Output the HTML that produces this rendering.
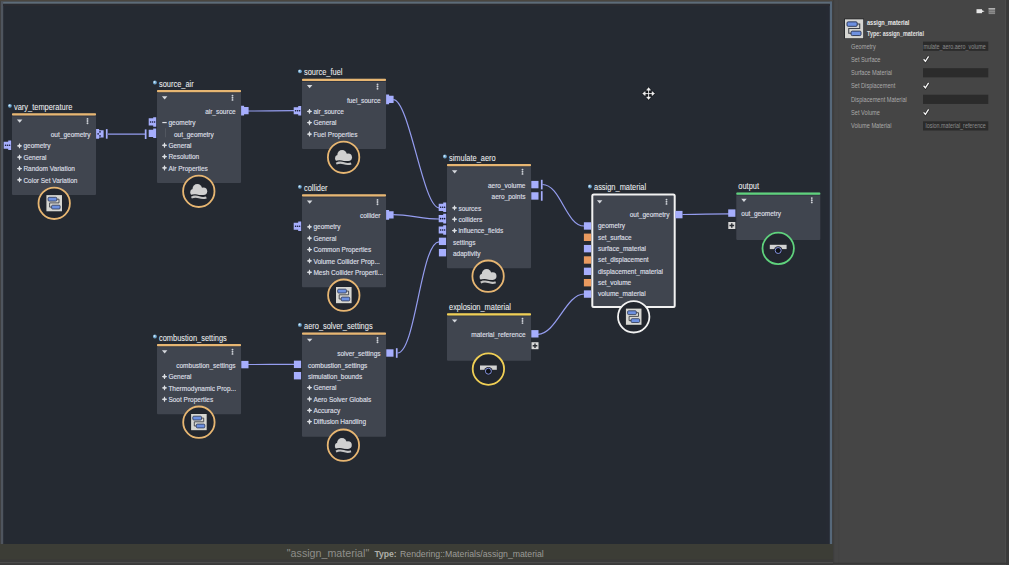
<!DOCTYPE html>
<html><head><meta charset="utf-8"><style>
html,body{margin:0;padding:0;width:1009px;height:565px;overflow:hidden;background:#454545;font-family:"Liberation Sans", sans-serif;}
</style></head><body>
<svg width="1009" height="565" viewBox="0 0 1009 565" style="position:absolute;left:0;top:0" font-family='"Liberation Sans", sans-serif'>
<rect x="0" y="0" width="1009" height="565" fill="#454545"/>
<rect x="0" y="0" width="833" height="565" fill="#3b3b3b"/>
<rect x="3" y="4" width="827" height="540" fill="#252a32"/>
<rect x="0" y="0" width="833" height="1.5" fill="#4a4640"/>
<rect x="1" y="1.6" width="831" height="2" fill="#5d6c7a"/>
<rect x="0.8" y="1.6" width="2.4" height="542.4" fill="#4f555e"/>
<rect x="825.5" y="4" width="4.3" height="540" fill="#262a33"/>
<rect x="829.8" y="1.6" width="2.3" height="542.4" fill="#56687a"/>
<rect x="3" y="4" width="827" height="2" fill="#2a2b31"/>
<rect x="0" y="544" width="833" height="15.7" fill="#3c3d36"/>
<rect x="0" y="559.7" width="833" height="5.3" fill="#3a3a3a"/>
<rect x="0" y="562.1" width="833" height="1.0" fill="#4e4e4e"/>
<text transform="translate(286.80,556.80) scale(1.0,1)" font-size="10.7" fill="#8e8e8a" font-weight="normal">"assign_material"</text>
<text transform="translate(374.40,556.80) scale(1.05,1)" font-size="8.2" fill="#afafaa" font-weight="bold">Type:</text>
<text transform="translate(400.00,557.00) scale(0.98,1)" font-size="8.9" fill="#9b9b97" font-weight="normal">Rendering::Materials/assign_material</text>
<rect x="833" y="0" width="176" height="565" fill="#454545"/>
<rect x="833" y="0" width="1.2" height="565" fill="#3e3e3e"/>
<rect x="838.5" y="0" width="0.8" height="565" fill="#424242"/>
<rect x="1005" y="0" width="1.2" height="565" fill="#4b4b4b"/>
<rect x="833" y="562.7" width="176" height="1.6" fill="#383838"/>
<rect x="833" y="564.3" width="176" height="0.7" fill="#424242"/>
<rect x="1006.2" y="0" width="2.8" height="565" fill="#393939"/>
<rect x="976.5" y="9.2" width="5.5" height="4" fill="#e6e6e6"/>
<path d="M982,10.2 L984.6,11.2 L982,12.3Z" fill="#e6e6e6"/>
<rect x="988.6" y="8" width="6.5" height="6.1" fill="#8a8a8a"/>
<rect x="988.6" y="8" width="6.5" height="1.2" fill="#b0b0b0"/>
<rect x="988.6" y="10.40" width="6.5" height="0.6" fill="#6a6a6a"/>
<rect x="988.6" y="12.30" width="6.5" height="0.6" fill="#6a6a6a"/>
<rect x="844.2" y="18.5" width="19.8" height="19.8" fill="#2c2c2c"/>
<g transform="translate(845.00,19.30) scale(1.17)">
<rect x="-0.3" y="-0.3" width="16.2" height="16.8" fill="#1c1f25"/>
<rect x="0" y="0" width="15.6" height="16.2" fill="#d6d6d2"/>
<path d="M10.2,4.1 H12.6 V7.8 H3.2 V12 H5.2" stroke="#3c4048" stroke-width="0.9" fill="none"/>
<rect x="1.7" y="2.2" width="8.7" height="3.8" rx="1" fill="#6d90e0" stroke="#2b3550" stroke-width="0.8"/>
<rect x="5.2" y="10.1" width="8.5" height="3.8" rx="1" fill="#6d90e0" stroke="#2b3550" stroke-width="0.8"/>
</g>
<text transform="translate(867.00,25.20) scale(0.78,1)" font-size="7.2" fill="#e8e8e8" font-weight="bold">assign_material</text>
<text transform="translate(867.00,36.20) scale(0.76,1)" font-size="7.2" fill="#e0e0e0" font-weight="bold">Type: assign_material</text>
<text transform="translate(851.00,48.50) scale(0.82,1)" font-size="6.9" fill="#aaaaaa" font-weight="normal">Geometry</text>
<rect x="923" y="41.60" width="65.3" height="9.2" fill="#2b2b2b"/>
<svg x="923" y="41.60" width="65.3" height="9.2"><text transform="translate(62.8,6.9) scale(0.78,1)" text-anchor="end" font-size="6.9" fill="#8c8c8c">mulate_aero.aero_volume</text></svg>
<text transform="translate(851.00,61.78) scale(0.82,1)" font-size="6.9" fill="#aaaaaa" font-weight="normal">Set Surface</text>
<path d="M923.6,59.28 L925.4,61.28 L928.6,56.28" stroke="#1e1e1e" stroke-width="2.6" fill="none"/>
<path d="M923.6,59.28 L925.4,61.28 L928.6,56.28" stroke="#f4f4f4" stroke-width="1.4" fill="none"/>
<text transform="translate(851.00,75.06) scale(0.82,1)" font-size="6.9" fill="#aaaaaa" font-weight="normal">Surface Material</text>
<rect x="923" y="68.16" width="65.3" height="9.2" fill="#2b2b2b"/>
<text transform="translate(851.00,88.34) scale(0.82,1)" font-size="6.9" fill="#aaaaaa" font-weight="normal">Set Displacement</text>
<path d="M923.6,85.84 L925.4,87.84 L928.6,82.84" stroke="#1e1e1e" stroke-width="2.6" fill="none"/>
<path d="M923.6,85.84 L925.4,87.84 L928.6,82.84" stroke="#f4f4f4" stroke-width="1.4" fill="none"/>
<text transform="translate(851.00,101.62) scale(0.82,1)" font-size="6.9" fill="#aaaaaa" font-weight="normal">Displacement Material</text>
<rect x="923" y="94.72" width="65.3" height="9.2" fill="#2b2b2b"/>
<text transform="translate(851.00,114.90) scale(0.82,1)" font-size="6.9" fill="#aaaaaa" font-weight="normal">Set Volume</text>
<path d="M923.6,112.40 L925.4,114.40 L928.6,109.40" stroke="#1e1e1e" stroke-width="2.6" fill="none"/>
<path d="M923.6,112.40 L925.4,114.40 L928.6,109.40" stroke="#f4f4f4" stroke-width="1.4" fill="none"/>
<text transform="translate(851.00,128.18) scale(0.82,1)" font-size="6.9" fill="#aaaaaa" font-weight="normal">Volume Material</text>
<rect x="923" y="121.28" width="65.3" height="9.2" fill="#2b2b2b"/>
<svg x="923" y="121.28" width="65.3" height="9.2"><text transform="translate(62.8,6.9) scale(0.78,1)" text-anchor="end" font-size="6.9" fill="#8c8c8c">losion.material_reference</text></svg>
<path d="M108,134.2 C126.5,134.2 126.5,134.2 145,134.2" stroke="#959df0" stroke-width="1.2" fill="none"/>
<rect x="144.8" y="129.4" width="1.7" height="9.6" fill="#a6aefd"/>
<path d="M393.3,99.6 C409.3,99.6 423,207.8 439,207.8" stroke="#959df0" stroke-width="1.2" fill="none"/>
<path d="M393.3,214.6 C409.3,214.6 423,219.0 439,219.0" stroke="#959df0" stroke-width="1.2" fill="none"/>
<path d="M397.5,353.0 C415.5,353.0 421,241.8 439,241.8" stroke="#959df0" stroke-width="1.2" fill="none"/>
<path d="M247.5,111 C270.75,111 270.75,110.7 294,110.7" stroke="#959df0" stroke-width="1.2" fill="none"/>
<path d="M247.5,364.5 C270.75,364.5 270.75,364.4 294,364.4" stroke="#959df0" stroke-width="1.2" fill="none"/>
<path d="M542.5,184.5 C560.5,184.5 566,226.0 584,226.0" stroke="#959df0" stroke-width="1.2" fill="none"/>
<path d="M538,334.3 C556,334.3 566,294.0 584,294.0" stroke="#959df0" stroke-width="1.2" fill="none"/>
<path d="M682.5,214.5 C705.75,214.5 705.75,213.8 729,213.8" stroke="#959df0" stroke-width="1.2" fill="none"/>
<rect x="12" y="113.3" width="84" height="81.60" rx="1" fill="#40454f"/>
<rect x="12" y="115.50" width="84" height="0.9" fill="#30343f"/>
<rect x="12" y="113.3" width="84" height="2.3" rx="0.8" fill="#e7b672"/>
<circle cx="9.90" cy="105.80" r="1.9" fill="#6fa6cf"/>
<circle cx="9.50" cy="105.30" r="0.9" fill="#cfe9f8"/>
<text transform="translate(14.00,109.90) scale(0.866,1)" font-size="8.6" fill="#eceef0" font-weight="normal" stroke="#eceef0" stroke-width="0.06">vary_temperature</text>
<path d="M16.90,119.60 H22.40 L19.65,122.70Z" fill="#d4d7dc"/>
<circle cx="87.50" cy="118.90" r="0.95" fill="#cfd2d8"/>
<circle cx="87.50" cy="121.05" r="0.95" fill="#cfd2d8"/>
<circle cx="87.50" cy="123.20" r="0.95" fill="#cfd2d8"/>
<text transform="translate(90.50,137.10) scale(0.857,1)" text-anchor="end" font-size="7.6" fill="#dcdfe3" font-weight="normal" stroke="#dcdfe3" stroke-width="0.18">out_geometry</text>
<path d="M96.10,129.10 H99.10 V130.30 H103.60 V137.50 H99.10 V138.70 H96.10Z" fill="#a6aefd"/>
<circle cx="100.00" cy="131.90" r="0.8" fill="#141833"/>
<circle cx="98.10" cy="133.90" r="0.8" fill="#141833"/>
<circle cx="100.00" cy="135.90" r="0.8" fill="#141833"/>
<rect x="105.90" y="129.10" width="1.7" height="9.6" fill="#a6aefd"/>
<path d="M18.65,145.00 L19.10,143.40 L19.90,143.40 L20.35,145.00 L21.95,145.45 L21.95,146.25 L20.35,146.70 L19.90,148.30 L19.10,148.30 L18.65,146.70 L17.05,146.25 L17.05,145.45Z" fill="#dcdfe3"/>
<text transform="translate(23.40,148.45) scale(0.857,1)" font-size="7.6" fill="#dcdfe3" font-weight="normal" stroke="#dcdfe3" stroke-width="0.18">geometry</text>
<path d="M11.20,140.45 H8.20 V141.65 H3.70 V148.85 H8.20 V150.05 H11.20Z" fill="#a6aefd"/>
<circle cx="5.60" cy="145.25" r="0.8" fill="#141833"/>
<circle cx="7.60" cy="145.25" r="0.8" fill="#141833"/>
<circle cx="9.60" cy="145.25" r="0.8" fill="#141833"/>
<path d="M18.65,156.35 L19.10,154.75 L19.90,154.75 L20.35,156.35 L21.95,156.80 L21.95,157.60 L20.35,158.05 L19.90,159.65 L19.10,159.65 L18.65,158.05 L17.05,157.60 L17.05,156.80Z" fill="#dcdfe3"/>
<text transform="translate(23.40,159.80) scale(0.857,1)" font-size="7.6" fill="#dcdfe3" font-weight="normal" stroke="#dcdfe3" stroke-width="0.18">General</text>
<path d="M18.65,167.70 L19.10,166.10 L19.90,166.10 L20.35,167.70 L21.95,168.15 L21.95,168.95 L20.35,169.40 L19.90,171.00 L19.10,171.00 L18.65,169.40 L17.05,168.95 L17.05,168.15Z" fill="#dcdfe3"/>
<text transform="translate(23.40,171.15) scale(0.857,1)" font-size="7.6" fill="#dcdfe3" font-weight="normal" stroke="#dcdfe3" stroke-width="0.18">Random Variation</text>
<path d="M18.65,179.05 L19.10,177.45 L19.90,177.45 L20.35,179.05 L21.95,179.50 L21.95,180.30 L20.35,180.75 L19.90,182.35 L19.10,182.35 L18.65,180.75 L17.05,180.30 L17.05,179.50Z" fill="#dcdfe3"/>
<text transform="translate(23.40,182.50) scale(0.857,1)" font-size="7.6" fill="#dcdfe3" font-weight="normal" stroke="#dcdfe3" stroke-width="0.18">Color Set Variation</text>
<circle cx="54.2" cy="203.3" r="15.7" fill="#22262e" stroke="#e7b672" stroke-width="1.8"/>
<g transform="translate(46.40,195.10) scale(1.0)">
<rect x="-0.3" y="-0.3" width="16.2" height="16.8" fill="#1c1f25"/>
<rect x="0" y="0" width="15.6" height="16.2" fill="#d6d6d2"/>
<path d="M10.2,4.1 H12.6 V7.8 H3.2 V12 H5.2" stroke="#3c4048" stroke-width="0.9" fill="none"/>
<rect x="1.7" y="2.2" width="8.7" height="3.8" rx="1" fill="#6d90e0" stroke="#2b3550" stroke-width="0.8"/>
<rect x="5.2" y="10.1" width="8.5" height="3.8" rx="1" fill="#6d90e0" stroke="#2b3550" stroke-width="0.8"/>
</g>
<rect x="157" y="90" width="84" height="92.95" rx="1" fill="#40454f"/>
<rect x="157" y="92.20" width="84" height="0.9" fill="#30343f"/>
<rect x="157" y="90" width="84" height="2.3" rx="0.8" fill="#e7b672"/>
<circle cx="154.90" cy="82.50" r="1.9" fill="#6fa6cf"/>
<circle cx="154.50" cy="82.00" r="0.9" fill="#cfe9f8"/>
<text transform="translate(159.00,86.60) scale(0.866,1)" font-size="8.6" fill="#eceef0" font-weight="normal" stroke="#eceef0" stroke-width="0.06">source_air</text>
<path d="M161.90,96.30 H167.40 L164.65,99.40Z" fill="#d4d7dc"/>
<circle cx="232.50" cy="95.60" r="0.95" fill="#cfd2d8"/>
<circle cx="232.50" cy="97.75" r="0.95" fill="#cfd2d8"/>
<circle cx="232.50" cy="99.90" r="0.95" fill="#cfd2d8"/>
<text transform="translate(235.50,113.80) scale(0.857,1)" text-anchor="end" font-size="7.6" fill="#dcdfe3" font-weight="normal" stroke="#dcdfe3" stroke-width="0.18">air_source</text>
<path d="M241.10,105.80 H244.10 V107.00 H248.60 V114.20 H244.10 V115.40 H241.10Z" fill="#a6aefd"/>
<path d="M162.30,122.55 H166.70" stroke="#dcdfe3" stroke-width="1.2"/>
<text transform="translate(168.40,125.15) scale(0.857,1)" font-size="7.6" fill="#dcdfe3" font-weight="normal" stroke="#dcdfe3" stroke-width="0.18">geometry</text>
<path d="M156.20,117.15 H153.20 V118.35 H148.70 V125.55 H153.20 V126.75 H156.20Z" fill="#a6aefd"/>
<circle cx="150.60" cy="121.95" r="0.8" fill="#141833"/>
<circle cx="152.60" cy="121.95" r="0.8" fill="#141833"/>
<circle cx="154.60" cy="121.95" r="0.8" fill="#141833"/>
<path d="M165.50,128.30 V137.30" stroke="#555a63" stroke-width="0.8"/>
<text transform="translate(174.00,136.50) scale(0.857,1)" font-size="7.6" fill="#dcdfe3" font-weight="normal" stroke="#dcdfe3" stroke-width="0.18">out_geometry</text>
<path d="M156.20,128.50 H153.20 V129.70 H148.70 V136.90 H153.20 V138.10 H156.20Z" fill="#a6aefd"/>
<path d="M163.65,144.40 L164.10,142.80 L164.90,142.80 L165.35,144.40 L166.95,144.85 L166.95,145.65 L165.35,146.10 L164.90,147.70 L164.10,147.70 L163.65,146.10 L162.05,145.65 L162.05,144.85Z" fill="#dcdfe3"/>
<text transform="translate(168.40,147.85) scale(0.857,1)" font-size="7.6" fill="#dcdfe3" font-weight="normal" stroke="#dcdfe3" stroke-width="0.18">General</text>
<path d="M163.65,155.75 L164.10,154.15 L164.90,154.15 L165.35,155.75 L166.95,156.20 L166.95,157.00 L165.35,157.45 L164.90,159.05 L164.10,159.05 L163.65,157.45 L162.05,157.00 L162.05,156.20Z" fill="#dcdfe3"/>
<text transform="translate(168.40,159.20) scale(0.857,1)" font-size="7.6" fill="#dcdfe3" font-weight="normal" stroke="#dcdfe3" stroke-width="0.18">Resolution</text>
<path d="M163.65,167.10 L164.10,165.50 L164.90,165.50 L165.35,167.10 L166.95,167.55 L166.95,168.35 L165.35,168.80 L164.90,170.40 L164.10,170.40 L163.65,168.80 L162.05,168.35 L162.05,167.55Z" fill="#dcdfe3"/>
<text transform="translate(168.40,170.55) scale(0.857,1)" font-size="7.6" fill="#dcdfe3" font-weight="normal" stroke="#dcdfe3" stroke-width="0.18">Air Properties</text>
<circle cx="198.8" cy="191.3" r="15.7" fill="#22262e" stroke="#e7b672" stroke-width="1.8"/>
<g transform="translate(198.80,191.30)" fill="#d0d0d0">
<circle cx="-5.2" cy="0.9" r="3.3"/>
<circle cx="-1.5" cy="-2.4" r="4.8"/>
<circle cx="4.6" cy="-0.1" r="3.8"/>
<rect x="-5.2" y="-0.5" width="9.8" height="4.2"/>
<path d="M-8.6,4.6 Q-4.2,2.6 0,4.2 T8.6,4.4" stroke="#1a1d24" stroke-width="1.3" fill="none"/>
<path d="M-7.4,6.3 Q-3.6,4.5 0.2,5.9 T7.6,6.1" stroke="#c4c4c4" stroke-width="2.1" fill="none"/>
</g>
<rect x="302" y="78.8" width="84" height="70.25" rx="1" fill="#40454f"/>
<rect x="302" y="81.00" width="84" height="0.9" fill="#30343f"/>
<rect x="302" y="78.8" width="84" height="2.3" rx="0.8" fill="#e7b672"/>
<circle cx="299.90" cy="71.30" r="1.9" fill="#6fa6cf"/>
<circle cx="299.50" cy="70.80" r="0.9" fill="#cfe9f8"/>
<text transform="translate(304.00,75.40) scale(0.866,1)" font-size="8.6" fill="#eceef0" font-weight="normal" stroke="#eceef0" stroke-width="0.06">source_fuel</text>
<path d="M306.90,85.10 H312.40 L309.65,88.20Z" fill="#d4d7dc"/>
<circle cx="377.50" cy="84.40" r="0.95" fill="#cfd2d8"/>
<circle cx="377.50" cy="86.55" r="0.95" fill="#cfd2d8"/>
<circle cx="377.50" cy="88.70" r="0.95" fill="#cfd2d8"/>
<text transform="translate(380.50,102.60) scale(0.857,1)" text-anchor="end" font-size="7.6" fill="#dcdfe3" font-weight="normal" stroke="#dcdfe3" stroke-width="0.18">fuel_source</text>
<path d="M386.10,94.60 H389.10 V95.80 H393.60 V103.00 H389.10 V104.20 H386.10Z" fill="#a6aefd"/>
<path d="M308.65,110.50 L309.10,108.90 L309.90,108.90 L310.35,110.50 L311.95,110.95 L311.95,111.75 L310.35,112.20 L309.90,113.80 L309.10,113.80 L308.65,112.20 L307.05,111.75 L307.05,110.95Z" fill="#dcdfe3"/>
<text transform="translate(313.40,113.95) scale(0.857,1)" font-size="7.6" fill="#dcdfe3" font-weight="normal" stroke="#dcdfe3" stroke-width="0.18">air_source</text>
<path d="M301.20,105.95 H298.20 V107.15 H293.70 V114.35 H298.20 V115.55 H301.20Z" fill="#a6aefd"/>
<circle cx="295.60" cy="110.75" r="0.8" fill="#141833"/>
<circle cx="297.60" cy="110.75" r="0.8" fill="#141833"/>
<circle cx="299.60" cy="110.75" r="0.8" fill="#141833"/>
<path d="M308.65,121.85 L309.10,120.25 L309.90,120.25 L310.35,121.85 L311.95,122.30 L311.95,123.10 L310.35,123.55 L309.90,125.15 L309.10,125.15 L308.65,123.55 L307.05,123.10 L307.05,122.30Z" fill="#dcdfe3"/>
<text transform="translate(313.40,125.30) scale(0.857,1)" font-size="7.6" fill="#dcdfe3" font-weight="normal" stroke="#dcdfe3" stroke-width="0.18">General</text>
<path d="M308.65,133.20 L309.10,131.60 L309.90,131.60 L310.35,133.20 L311.95,133.65 L311.95,134.45 L310.35,134.90 L309.90,136.50 L309.10,136.50 L308.65,134.90 L307.05,134.45 L307.05,133.65Z" fill="#dcdfe3"/>
<text transform="translate(313.40,136.65) scale(0.857,1)" font-size="7.6" fill="#dcdfe3" font-weight="normal" stroke="#dcdfe3" stroke-width="0.18">Fuel Properties</text>
<circle cx="343.6" cy="157.3" r="15.7" fill="#22262e" stroke="#e7b672" stroke-width="1.8"/>
<g transform="translate(343.60,157.30)" fill="#d0d0d0">
<circle cx="-5.2" cy="0.9" r="3.3"/>
<circle cx="-1.5" cy="-2.4" r="4.8"/>
<circle cx="4.6" cy="-0.1" r="3.8"/>
<rect x="-5.2" y="-0.5" width="9.8" height="4.2"/>
<path d="M-8.6,4.6 Q-4.2,2.6 0,4.2 T8.6,4.4" stroke="#1a1d24" stroke-width="1.3" fill="none"/>
<path d="M-7.4,6.3 Q-3.6,4.5 0.2,5.9 T7.6,6.1" stroke="#c4c4c4" stroke-width="2.1" fill="none"/>
</g>
<rect x="302" y="194.3" width="84" height="92.95" rx="1" fill="#40454f"/>
<rect x="302" y="196.50" width="84" height="0.9" fill="#30343f"/>
<rect x="302" y="194.3" width="84" height="2.3" rx="0.8" fill="#e7b672"/>
<circle cx="299.90" cy="186.80" r="1.9" fill="#6fa6cf"/>
<circle cx="299.50" cy="186.30" r="0.9" fill="#cfe9f8"/>
<text transform="translate(304.00,190.90) scale(0.866,1)" font-size="8.6" fill="#eceef0" font-weight="normal" stroke="#eceef0" stroke-width="0.06">collider</text>
<path d="M306.90,200.60 H312.40 L309.65,203.70Z" fill="#d4d7dc"/>
<circle cx="377.50" cy="199.90" r="0.95" fill="#cfd2d8"/>
<circle cx="377.50" cy="202.05" r="0.95" fill="#cfd2d8"/>
<circle cx="377.50" cy="204.20" r="0.95" fill="#cfd2d8"/>
<text transform="translate(380.50,218.10) scale(0.857,1)" text-anchor="end" font-size="7.6" fill="#dcdfe3" font-weight="normal" stroke="#dcdfe3" stroke-width="0.18">collider</text>
<path d="M386.10,210.10 H389.10 V211.30 H393.60 V218.50 H389.10 V219.70 H386.10Z" fill="#a6aefd"/>
<path d="M308.65,226.00 L309.10,224.40 L309.90,224.40 L310.35,226.00 L311.95,226.45 L311.95,227.25 L310.35,227.70 L309.90,229.30 L309.10,229.30 L308.65,227.70 L307.05,227.25 L307.05,226.45Z" fill="#dcdfe3"/>
<text transform="translate(313.40,229.45) scale(0.857,1)" font-size="7.6" fill="#dcdfe3" font-weight="normal" stroke="#dcdfe3" stroke-width="0.18">geometry</text>
<path d="M301.20,221.45 H298.20 V222.65 H293.70 V229.85 H298.20 V231.05 H301.20Z" fill="#a6aefd"/>
<circle cx="295.60" cy="226.25" r="0.8" fill="#141833"/>
<circle cx="297.60" cy="226.25" r="0.8" fill="#141833"/>
<circle cx="299.60" cy="226.25" r="0.8" fill="#141833"/>
<path d="M308.65,237.35 L309.10,235.75 L309.90,235.75 L310.35,237.35 L311.95,237.80 L311.95,238.60 L310.35,239.05 L309.90,240.65 L309.10,240.65 L308.65,239.05 L307.05,238.60 L307.05,237.80Z" fill="#dcdfe3"/>
<text transform="translate(313.40,240.80) scale(0.857,1)" font-size="7.6" fill="#dcdfe3" font-weight="normal" stroke="#dcdfe3" stroke-width="0.18">General</text>
<path d="M308.65,248.70 L309.10,247.10 L309.90,247.10 L310.35,248.70 L311.95,249.15 L311.95,249.95 L310.35,250.40 L309.90,252.00 L309.10,252.00 L308.65,250.40 L307.05,249.95 L307.05,249.15Z" fill="#dcdfe3"/>
<text transform="translate(313.40,252.15) scale(0.857,1)" font-size="7.6" fill="#dcdfe3" font-weight="normal" stroke="#dcdfe3" stroke-width="0.18">Common Properties</text>
<path d="M308.65,260.05 L309.10,258.45 L309.90,258.45 L310.35,260.05 L311.95,260.50 L311.95,261.30 L310.35,261.75 L309.90,263.35 L309.10,263.35 L308.65,261.75 L307.05,261.30 L307.05,260.50Z" fill="#dcdfe3"/>
<text transform="translate(313.40,263.50) scale(0.857,1)" font-size="7.6" fill="#dcdfe3" font-weight="normal" stroke="#dcdfe3" stroke-width="0.18">Volume Collider Prop...</text>
<path d="M308.65,271.40 L309.10,269.80 L309.90,269.80 L310.35,271.40 L311.95,271.85 L311.95,272.65 L310.35,273.10 L309.90,274.70 L309.10,274.70 L308.65,273.10 L307.05,272.65 L307.05,271.85Z" fill="#dcdfe3"/>
<text transform="translate(313.40,274.85) scale(0.857,1)" font-size="7.6" fill="#dcdfe3" font-weight="normal" stroke="#dcdfe3" stroke-width="0.18">Mesh Collider Properti...</text>
<circle cx="343.8" cy="295.2" r="15.7" fill="#22262e" stroke="#e7b672" stroke-width="1.8"/>
<g transform="translate(336.00,287.00) scale(1.0)">
<rect x="-0.3" y="-0.3" width="16.2" height="16.8" fill="#1c1f25"/>
<rect x="0" y="0" width="15.6" height="16.2" fill="#d6d6d2"/>
<path d="M10.2,4.1 H12.6 V7.8 H3.2 V12 H5.2" stroke="#3c4048" stroke-width="0.9" fill="none"/>
<rect x="1.7" y="2.2" width="8.7" height="3.8" rx="1" fill="#6d90e0" stroke="#2b3550" stroke-width="0.8"/>
<rect x="5.2" y="10.1" width="8.5" height="3.8" rx="1" fill="#6d90e0" stroke="#2b3550" stroke-width="0.8"/>
</g>
<rect x="447" y="164" width="84" height="104.30" rx="1" fill="#40454f"/>
<rect x="447" y="166.20" width="84" height="0.9" fill="#30343f"/>
<rect x="447" y="164" width="84" height="2.3" rx="0.8" fill="#e7b672"/>
<circle cx="444.90" cy="156.50" r="1.9" fill="#6fa6cf"/>
<circle cx="444.50" cy="156.00" r="0.9" fill="#cfe9f8"/>
<text transform="translate(449.00,160.60) scale(0.866,1)" font-size="8.6" fill="#eceef0" font-weight="normal" stroke="#eceef0" stroke-width="0.06">simulate_aero</text>
<path d="M451.90,170.30 H457.40 L454.65,173.40Z" fill="#d4d7dc"/>
<circle cx="522.50" cy="169.60" r="0.95" fill="#cfd2d8"/>
<circle cx="522.50" cy="171.75" r="0.95" fill="#cfd2d8"/>
<circle cx="522.50" cy="173.90" r="0.95" fill="#cfd2d8"/>
<text transform="translate(525.50,187.80) scale(0.857,1)" text-anchor="end" font-size="7.6" fill="#dcdfe3" font-weight="normal" stroke="#dcdfe3" stroke-width="0.18">aero_volume</text>
<rect x="531.30" y="180.90" width="7.2" height="7.4" fill="#a6aefd"/>
<rect x="540.90" y="179.80" width="1.7" height="9.6" fill="#a6aefd"/>
<text transform="translate(525.50,199.15) scale(0.857,1)" text-anchor="end" font-size="7.6" fill="#dcdfe3" font-weight="normal" stroke="#dcdfe3" stroke-width="0.18">aero_points</text>
<rect x="531.30" y="192.25" width="7.2" height="7.4" fill="#a6aefd"/>
<rect x="540.90" y="191.15" width="1.7" height="9.6" fill="#a6aefd"/>
<path d="M453.65,207.05 L454.10,205.45 L454.90,205.45 L455.35,207.05 L456.95,207.50 L456.95,208.30 L455.35,208.75 L454.90,210.35 L454.10,210.35 L453.65,208.75 L452.05,208.30 L452.05,207.50Z" fill="#dcdfe3"/>
<text transform="translate(458.40,210.50) scale(0.857,1)" font-size="7.6" fill="#dcdfe3" font-weight="normal" stroke="#dcdfe3" stroke-width="0.18">sources</text>
<path d="M446.20,202.50 H443.20 V203.70 H438.70 V210.90 H443.20 V212.10 H446.20Z" fill="#a6aefd"/>
<circle cx="440.60" cy="207.30" r="0.8" fill="#141833"/>
<circle cx="442.60" cy="207.30" r="0.8" fill="#141833"/>
<circle cx="444.60" cy="207.30" r="0.8" fill="#141833"/>
<path d="M453.65,218.40 L454.10,216.80 L454.90,216.80 L455.35,218.40 L456.95,218.85 L456.95,219.65 L455.35,220.10 L454.90,221.70 L454.10,221.70 L453.65,220.10 L452.05,219.65 L452.05,218.85Z" fill="#dcdfe3"/>
<text transform="translate(458.40,221.85) scale(0.857,1)" font-size="7.6" fill="#dcdfe3" font-weight="normal" stroke="#dcdfe3" stroke-width="0.18">colliders</text>
<path d="M446.20,213.85 H443.20 V215.05 H438.70 V222.25 H443.20 V223.45 H446.20Z" fill="#a6aefd"/>
<circle cx="440.60" cy="218.65" r="0.8" fill="#141833"/>
<circle cx="442.60" cy="218.65" r="0.8" fill="#141833"/>
<circle cx="444.60" cy="218.65" r="0.8" fill="#141833"/>
<path d="M453.65,229.75 L454.10,228.15 L454.90,228.15 L455.35,229.75 L456.95,230.20 L456.95,231.00 L455.35,231.45 L454.90,233.05 L454.10,233.05 L453.65,231.45 L452.05,231.00 L452.05,230.20Z" fill="#dcdfe3"/>
<text transform="translate(458.40,233.20) scale(0.857,1)" font-size="7.6" fill="#dcdfe3" font-weight="normal" stroke="#dcdfe3" stroke-width="0.18">influence_fields</text>
<path d="M446.20,225.20 H443.20 V226.40 H438.70 V233.60 H443.20 V234.80 H446.20Z" fill="#a6aefd"/>
<circle cx="440.60" cy="230.00" r="0.8" fill="#141833"/>
<circle cx="442.60" cy="230.00" r="0.8" fill="#141833"/>
<circle cx="444.60" cy="230.00" r="0.8" fill="#141833"/>
<text transform="translate(453.00,244.55) scale(0.857,1)" font-size="7.6" fill="#dcdfe3" font-weight="normal" stroke="#dcdfe3" stroke-width="0.18">settings</text>
<rect x="438.90" y="237.65" width="7.2" height="7.4" fill="#a6aefd"/>
<text transform="translate(453.00,255.90) scale(0.857,1)" font-size="7.6" fill="#dcdfe3" font-weight="normal" stroke="#dcdfe3" stroke-width="0.18">adaptivity</text>
<rect x="438.90" y="249.00" width="7.2" height="7.4" fill="#a6aefd"/>
<circle cx="488.1" cy="276.2" r="15.7" fill="#22262e" stroke="#e7b672" stroke-width="1.8"/>
<g transform="translate(488.10,276.20)" fill="#d0d0d0">
<circle cx="-5.2" cy="0.9" r="3.3"/>
<circle cx="-1.5" cy="-2.4" r="4.8"/>
<circle cx="4.6" cy="-0.1" r="3.8"/>
<rect x="-5.2" y="-0.5" width="9.8" height="4.2"/>
<path d="M-8.6,4.6 Q-4.2,2.6 0,4.2 T8.6,4.4" stroke="#1a1d24" stroke-width="1.3" fill="none"/>
<path d="M-7.4,6.3 Q-3.6,4.5 0.2,5.9 T7.6,6.1" stroke="#c4c4c4" stroke-width="2.1" fill="none"/>
</g>
<rect x="592" y="194" width="83" height="114.00" fill="#40454f"/>
<rect x="592.30" y="194.60" width="82.40" height="112.40" rx="1.5" fill="none" stroke="#f2f2f2" stroke-width="2"/>
<circle cx="589.90" cy="186.50" r="1.9" fill="#6fa6cf"/>
<circle cx="589.50" cy="186.00" r="0.9" fill="#cfe9f8"/>
<text transform="translate(594.00,189.60) scale(0.866,1)" font-size="8.6" fill="#eceef0" font-weight="normal" stroke="#eceef0" stroke-width="0.06">assign_material</text>
<path d="M596.90,200.30 H602.40 L599.65,203.40Z" fill="#d4d7dc"/>
<circle cx="666.50" cy="199.60" r="0.95" fill="#cfd2d8"/>
<circle cx="666.50" cy="201.75" r="0.95" fill="#cfd2d8"/>
<circle cx="666.50" cy="203.90" r="0.95" fill="#cfd2d8"/>
<text transform="translate(669.50,216.90) scale(0.857,1)" text-anchor="end" font-size="7.6" fill="#dcdfe3" font-weight="normal" stroke="#dcdfe3" stroke-width="0.18">out_geometry</text>
<rect x="675.30" y="210.90" width="7.2" height="7.4" fill="#a6aefd"/>
<text transform="translate(598.00,228.25) scale(0.857,1)" font-size="7.6" fill="#dcdfe3" font-weight="normal" stroke="#dcdfe3" stroke-width="0.18">geometry</text>
<rect x="583.90" y="222.25" width="7.2" height="7.4" fill="#a6aefd"/>
<text transform="translate(598.00,239.60) scale(0.857,1)" font-size="7.6" fill="#dcdfe3" font-weight="normal" stroke="#dcdfe3" stroke-width="0.18">set_surface</text>
<rect x="583.90" y="233.60" width="7.2" height="7.4" fill="#e99a5f"/>
<text transform="translate(598.00,250.95) scale(0.857,1)" font-size="7.6" fill="#dcdfe3" font-weight="normal" stroke="#dcdfe3" stroke-width="0.18">surface_material</text>
<rect x="583.90" y="244.95" width="7.2" height="7.4" fill="#a6aefd"/>
<text transform="translate(598.00,262.30) scale(0.857,1)" font-size="7.6" fill="#dcdfe3" font-weight="normal" stroke="#dcdfe3" stroke-width="0.18">set_displacement</text>
<rect x="583.90" y="256.30" width="7.2" height="7.4" fill="#e99a5f"/>
<text transform="translate(598.00,273.65) scale(0.857,1)" font-size="7.6" fill="#dcdfe3" font-weight="normal" stroke="#dcdfe3" stroke-width="0.18">displacement_material</text>
<rect x="583.90" y="267.65" width="7.2" height="7.4" fill="#a6aefd"/>
<text transform="translate(598.00,285.00) scale(0.857,1)" font-size="7.6" fill="#dcdfe3" font-weight="normal" stroke="#dcdfe3" stroke-width="0.18">set_volume</text>
<rect x="583.90" y="279.00" width="7.2" height="7.4" fill="#e99a5f"/>
<text transform="translate(598.00,296.35) scale(0.857,1)" font-size="7.6" fill="#dcdfe3" font-weight="normal" stroke="#dcdfe3" stroke-width="0.18">volume_material</text>
<rect x="583.90" y="290.35" width="7.2" height="7.4" fill="#a6aefd"/>
<circle cx="633.7" cy="316.8" r="15.7" fill="#22262e" stroke="#f2f2f2" stroke-width="1.8"/>
<g transform="translate(625.90,308.60) scale(1.0)">
<rect x="-0.3" y="-0.3" width="16.2" height="16.8" fill="#1c1f25"/>
<rect x="0" y="0" width="15.6" height="16.2" fill="#d6d6d2"/>
<path d="M10.2,4.1 H12.6 V7.8 H3.2 V12 H5.2" stroke="#3c4048" stroke-width="0.9" fill="none"/>
<rect x="1.7" y="2.2" width="8.7" height="3.8" rx="1" fill="#6d90e0" stroke="#2b3550" stroke-width="0.8"/>
<rect x="5.2" y="10.1" width="8.5" height="3.8" rx="1" fill="#6d90e0" stroke="#2b3550" stroke-width="0.8"/>
</g>
<rect x="736.3" y="192.5" width="84" height="47.50" rx="1" fill="#40454f"/>
<rect x="736.3" y="194.70" width="84" height="0.9" fill="#30343f"/>
<rect x="736.3" y="192.5" width="84" height="2.3" rx="0.8" fill="#5fd27d"/>
<text transform="translate(738.30,189.10) scale(0.866,1)" font-size="8.6" fill="#eceef0" font-weight="normal" stroke="#eceef0" stroke-width="0.06">output</text>
<path d="M741.20,198.80 H746.70 L743.95,201.90Z" fill="#d4d7dc"/>
<circle cx="811.80" cy="198.10" r="0.95" fill="#cfd2d8"/>
<circle cx="811.80" cy="200.25" r="0.95" fill="#cfd2d8"/>
<circle cx="811.80" cy="202.40" r="0.95" fill="#cfd2d8"/>
<text transform="translate(741.30,216.30) scale(0.857,1)" font-size="7.6" fill="#dcdfe3" font-weight="normal" stroke="#dcdfe3" stroke-width="0.18">out_geometry</text>
<rect x="728.20" y="209.40" width="7.2" height="7.4" fill="#a6aefd"/>
<rect x="728.30" y="222.00" width="7" height="7" fill="#d8d8d8"/>
<path d="M731.80,223.20 V227.80 M729.50,225.50 H734.10" stroke="#2a2d33" stroke-width="1.4"/>
<circle cx="778.2" cy="248.4" r="15.7" fill="#22262e" stroke="#5fd27d" stroke-width="1.8"/>
<rect x="769.80" y="244.80" width="16.8" height="4.3" fill="#d2d2d2"/>
<circle cx="778.20" cy="250.50" r="4.3" fill="#1d2027"/>
<circle cx="778.20" cy="250.50" r="3.0" fill="#101216" stroke="#8391df" stroke-width="1.0"/>
<rect x="157" y="344" width="84" height="70.25" rx="1" fill="#40454f"/>
<rect x="157" y="346.20" width="84" height="0.9" fill="#30343f"/>
<rect x="157" y="344" width="84" height="2.3" rx="0.8" fill="#e7b672"/>
<circle cx="154.90" cy="336.50" r="1.9" fill="#6fa6cf"/>
<circle cx="154.50" cy="336.00" r="0.9" fill="#cfe9f8"/>
<text transform="translate(159.00,340.60) scale(0.866,1)" font-size="8.6" fill="#eceef0" font-weight="normal" stroke="#eceef0" stroke-width="0.06">combustion_settings</text>
<path d="M161.90,350.30 H167.40 L164.65,353.40Z" fill="#d4d7dc"/>
<circle cx="232.50" cy="349.60" r="0.95" fill="#cfd2d8"/>
<circle cx="232.50" cy="351.75" r="0.95" fill="#cfd2d8"/>
<circle cx="232.50" cy="353.90" r="0.95" fill="#cfd2d8"/>
<text transform="translate(235.50,367.80) scale(0.857,1)" text-anchor="end" font-size="7.6" fill="#dcdfe3" font-weight="normal" stroke="#dcdfe3" stroke-width="0.18">combustion_settings</text>
<rect x="241.30" y="360.90" width="7.2" height="7.4" fill="#a6aefd"/>
<path d="M163.65,375.70 L164.10,374.10 L164.90,374.10 L165.35,375.70 L166.95,376.15 L166.95,376.95 L165.35,377.40 L164.90,379.00 L164.10,379.00 L163.65,377.40 L162.05,376.95 L162.05,376.15Z" fill="#dcdfe3"/>
<text transform="translate(168.40,379.15) scale(0.857,1)" font-size="7.6" fill="#dcdfe3" font-weight="normal" stroke="#dcdfe3" stroke-width="0.18">General</text>
<path d="M163.65,387.05 L164.10,385.45 L164.90,385.45 L165.35,387.05 L166.95,387.50 L166.95,388.30 L165.35,388.75 L164.90,390.35 L164.10,390.35 L163.65,388.75 L162.05,388.30 L162.05,387.50Z" fill="#dcdfe3"/>
<text transform="translate(168.40,390.50) scale(0.857,1)" font-size="7.6" fill="#dcdfe3" font-weight="normal" stroke="#dcdfe3" stroke-width="0.18">Thermodynamic Prop...</text>
<path d="M163.65,398.40 L164.10,396.80 L164.90,396.80 L165.35,398.40 L166.95,398.85 L166.95,399.65 L165.35,400.10 L164.90,401.70 L164.10,401.70 L163.65,400.10 L162.05,399.65 L162.05,398.85Z" fill="#dcdfe3"/>
<text transform="translate(168.40,401.85) scale(0.857,1)" font-size="7.6" fill="#dcdfe3" font-weight="normal" stroke="#dcdfe3" stroke-width="0.18">Soot Properties</text>
<circle cx="198.9" cy="422.2" r="15.7" fill="#22262e" stroke="#e7b672" stroke-width="1.8"/>
<g transform="translate(191.10,414.00) scale(1.0)">
<rect x="-0.3" y="-0.3" width="16.2" height="16.8" fill="#1c1f25"/>
<rect x="0" y="0" width="15.6" height="16.2" fill="#d6d6d2"/>
<path d="M10.2,4.1 H12.6 V7.8 H3.2 V12 H5.2" stroke="#3c4048" stroke-width="0.9" fill="none"/>
<rect x="1.7" y="2.2" width="8.7" height="3.8" rx="1" fill="#6d90e0" stroke="#2b3550" stroke-width="0.8"/>
<rect x="5.2" y="10.1" width="8.5" height="3.8" rx="1" fill="#6d90e0" stroke="#2b3550" stroke-width="0.8"/>
</g>
<rect x="302" y="332.4" width="84" height="104.30" rx="1" fill="#40454f"/>
<rect x="302" y="334.60" width="84" height="0.9" fill="#30343f"/>
<rect x="302" y="332.4" width="84" height="2.3" rx="0.8" fill="#e7b672"/>
<circle cx="299.90" cy="324.90" r="1.9" fill="#6fa6cf"/>
<circle cx="299.50" cy="324.40" r="0.9" fill="#cfe9f8"/>
<text transform="translate(304.00,329.00) scale(0.866,1)" font-size="8.6" fill="#eceef0" font-weight="normal" stroke="#eceef0" stroke-width="0.06">aero_solver_settings</text>
<path d="M306.90,338.70 H312.40 L309.65,341.80Z" fill="#d4d7dc"/>
<circle cx="377.50" cy="338.00" r="0.95" fill="#cfd2d8"/>
<circle cx="377.50" cy="340.15" r="0.95" fill="#cfd2d8"/>
<circle cx="377.50" cy="342.30" r="0.95" fill="#cfd2d8"/>
<text transform="translate(380.50,356.20) scale(0.857,1)" text-anchor="end" font-size="7.6" fill="#dcdfe3" font-weight="normal" stroke="#dcdfe3" stroke-width="0.18">solver_settings</text>
<rect x="386.30" y="349.30" width="7.2" height="7.4" fill="#a6aefd"/>
<rect x="395.90" y="348.20" width="1.7" height="9.6" fill="#a6aefd"/>
<text transform="translate(308.00,367.55) scale(0.857,1)" font-size="7.6" fill="#dcdfe3" font-weight="normal" stroke="#dcdfe3" stroke-width="0.18">combustion_settings</text>
<rect x="293.90" y="360.65" width="7.2" height="7.4" fill="#a6aefd"/>
<text transform="translate(308.00,378.90) scale(0.857,1)" font-size="7.6" fill="#dcdfe3" font-weight="normal" stroke="#dcdfe3" stroke-width="0.18">simulation_bounds</text>
<rect x="293.90" y="372.00" width="7.2" height="7.4" fill="#a6aefd"/>
<path d="M308.65,386.80 L309.10,385.20 L309.90,385.20 L310.35,386.80 L311.95,387.25 L311.95,388.05 L310.35,388.50 L309.90,390.10 L309.10,390.10 L308.65,388.50 L307.05,388.05 L307.05,387.25Z" fill="#dcdfe3"/>
<text transform="translate(313.40,390.25) scale(0.857,1)" font-size="7.6" fill="#dcdfe3" font-weight="normal" stroke="#dcdfe3" stroke-width="0.18">General</text>
<path d="M308.65,398.15 L309.10,396.55 L309.90,396.55 L310.35,398.15 L311.95,398.60 L311.95,399.40 L310.35,399.85 L309.90,401.45 L309.10,401.45 L308.65,399.85 L307.05,399.40 L307.05,398.60Z" fill="#dcdfe3"/>
<text transform="translate(313.40,401.60) scale(0.857,1)" font-size="7.6" fill="#dcdfe3" font-weight="normal" stroke="#dcdfe3" stroke-width="0.18">Aero Solver Globals</text>
<path d="M308.65,409.50 L309.10,407.90 L309.90,407.90 L310.35,409.50 L311.95,409.95 L311.95,410.75 L310.35,411.20 L309.90,412.80 L309.10,412.80 L308.65,411.20 L307.05,410.75 L307.05,409.95Z" fill="#dcdfe3"/>
<text transform="translate(313.40,412.95) scale(0.857,1)" font-size="7.6" fill="#dcdfe3" font-weight="normal" stroke="#dcdfe3" stroke-width="0.18">Accuracy</text>
<path d="M308.65,420.85 L309.10,419.25 L309.90,419.25 L310.35,420.85 L311.95,421.30 L311.95,422.10 L310.35,422.55 L309.90,424.15 L309.10,424.15 L308.65,422.55 L307.05,422.10 L307.05,421.30Z" fill="#dcdfe3"/>
<text transform="translate(313.40,424.30) scale(0.857,1)" font-size="7.6" fill="#dcdfe3" font-weight="normal" stroke="#dcdfe3" stroke-width="0.18">Diffusion Handling</text>
<circle cx="343.4" cy="445.2" r="15.7" fill="#22262e" stroke="#e7b672" stroke-width="1.8"/>
<g transform="translate(343.40,445.20)" fill="#d0d0d0">
<circle cx="-5.2" cy="0.9" r="3.3"/>
<circle cx="-1.5" cy="-2.4" r="4.8"/>
<circle cx="4.6" cy="-0.1" r="3.8"/>
<rect x="-5.2" y="-0.5" width="9.8" height="4.2"/>
<path d="M-8.6,4.6 Q-4.2,2.6 0,4.2 T8.6,4.4" stroke="#1a1d24" stroke-width="1.3" fill="none"/>
<path d="M-7.4,6.3 Q-3.6,4.5 0.2,5.9 T7.6,6.1" stroke="#c4c4c4" stroke-width="2.1" fill="none"/>
</g>
<rect x="447" y="313.2" width="84" height="47.50" rx="1" fill="#40454f"/>
<rect x="447" y="315.40" width="84" height="0.9" fill="#30343f"/>
<rect x="447" y="313.2" width="84" height="2.3" rx="0.8" fill="#f0cf55"/>
<text transform="translate(449.00,309.80) scale(0.866,1)" font-size="8.6" fill="#eceef0" font-weight="normal" stroke="#eceef0" stroke-width="0.06">explosion_material</text>
<path d="M451.90,319.50 H457.40 L454.65,322.60Z" fill="#d4d7dc"/>
<circle cx="522.50" cy="318.80" r="0.95" fill="#cfd2d8"/>
<circle cx="522.50" cy="320.95" r="0.95" fill="#cfd2d8"/>
<circle cx="522.50" cy="323.10" r="0.95" fill="#cfd2d8"/>
<text transform="translate(525.50,337.00) scale(0.857,1)" text-anchor="end" font-size="7.6" fill="#dcdfe3" font-weight="normal" stroke="#dcdfe3" stroke-width="0.18">material_reference</text>
<rect x="531.30" y="330.10" width="7.2" height="7.4" fill="#a6aefd"/>
<rect x="531.50" y="342.20" width="7" height="7" fill="#d8d8d8"/>
<path d="M535.00,343.40 V348.00 M532.70,345.70 H537.30" stroke="#2a2d33" stroke-width="1.4"/>
<circle cx="488.4" cy="369.1" r="15.7" fill="#22262e" stroke="#f0cf55" stroke-width="1.8"/>
<rect x="480.00" y="365.50" width="16.8" height="4.3" fill="#d2d2d2"/>
<circle cx="488.40" cy="371.20" r="4.3" fill="#1d2027"/>
<circle cx="488.40" cy="371.20" r="3.0" fill="#101216" stroke="#8391df" stroke-width="1.0"/>
<g transform="translate(648.6,93.6)">
<path d="M0,-6.6 L6.6,0 L0,6.6 L-6.6,0Z" fill="#16181d" opacity="0.75"/>
<path d="M0,-5.2 V5.2 M-5.2,0 H5.2" stroke="#101216" stroke-width="3" stroke-linecap="round"/>
<path d="M0,-5.2 V5.2 M-5.2,0 H5.2" stroke="#f0f0f0" stroke-width="0.9"/>
<path d="M0,-6 L-2,-3.4 H2Z M0,6 L-2,3.4 H2Z M-6,0 L-3.4,-2 V2Z M6,0 L3.4,-2 V2Z" fill="#f0f0f0" stroke="#f0f0f0" stroke-width="0.5" stroke-linejoin="round"/>
</g>
</svg>
</body></html>
